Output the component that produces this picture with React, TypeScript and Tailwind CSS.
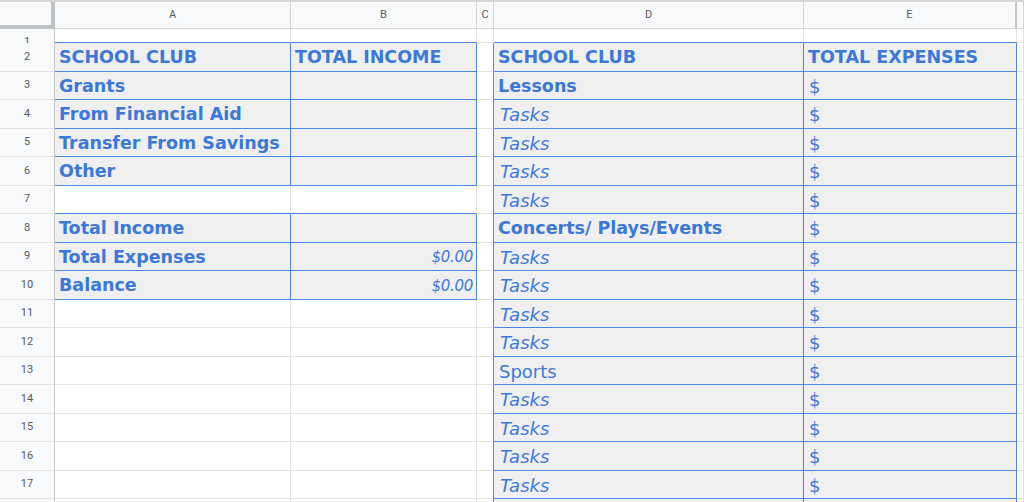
import React from "react";

// ── Sheet data ────────────────────────────────────────────────────────────────

type Cell = { text?: string; kind?: "bold" | "italic" | "plain" | "money" };

const COLS = ["A", "B", "C", "D", "E", ""];
const COL_W = ["w-[236px]", "w-[186px]", "w-[17px]", "w-[310px]", "w-[213px]", "flex-1"];

const ROW_H: Record<number, string> = {};
for (let r = 2; r <= 18; r++) ROW_H[r] = r % 2 === 0 ? "h-[29px]" : "h-[28px]";

const A: Record<number, Cell> = {
  2: { text: "SCHOOL CLUB", kind: "bold" },
  3: { text: "Grants", kind: "bold" },
  4: { text: "From Financial Aid", kind: "bold" },
  5: { text: "Transfer From Savings", kind: "bold" },
  6: { text: "Other", kind: "bold" },
  8: { text: "Total Income", kind: "bold" },
  9: { text: "Total Expenses", kind: "bold" },
  10: { text: "Balance", kind: "bold" },
};

const B: Record<number, Cell> = {
  2: { text: "TOTAL INCOME", kind: "bold" },
  9: { text: "$0.00", kind: "money" },
  10: { text: "$0.00", kind: "money" },
};

const D: Record<number, Cell> = {
  2: { text: "SCHOOL CLUB", kind: "bold" },
  3: { text: "Lessons", kind: "bold" },
  8: { text: "Concerts/ Plays/Events", kind: "bold" },
  13: { text: "Sports", kind: "plain" },
};
for (const r of [4, 5, 6, 7, 9, 10, 11, 12, 14, 15, 16, 17, 18]) D[r] = { text: "Tasks", kind: "italic" };

const E: Record<number, Cell> = { 2: { text: "TOTAL EXPENSES", kind: "bold" } };
for (let r = 3; r <= 18; r++) E[r] = { text: "$", kind: "plain" };

const DATA = [A, B, {}, D, E, {}] as Record<number, Cell>[];

function isBlue(r: number, c: number): boolean {
  if (c === 0 || c === 1) return (r >= 2 && r <= 6) || (r >= 8 && r <= 10);
  if (c === 3 || c === 4) return r >= 2 && r <= 18;
  return false;
}

// ── Cells ─────────────────────────────────────────────────────────────────────

function textClass(kind?: Cell["kind"]): string {
  switch (kind) {
    case "bold":
      return "font-bold text-[17.5px] pl-[4px]";
    case "italic":
      return "italic text-[18px] pl-[6px]";
    case "money":
      return "italic text-[15px] ml-auto pr-[3px] tracking-[-0.3px]";
    default:
      return "text-[18px] pl-[5px]";
  }
}

function SheetCell({ r, c }: { r: number; c: number }): React.ReactElement {
  const cell = DATA[c][r];
  const blue = isBlue(r, c);
  const rightBlue = blue || isBlue(r, c + 1);
  const bottomBlue = blue || isBlue(r + 1, c);
  return (
    <div
      className={`${COL_W[c]} shrink-0 h-full flex items-center pt-[2px] overflow-hidden whitespace-nowrap border-r border-b ${
        rightBlue ? "border-r-[#4a86e8]" : "border-r-[#e2e3e3]"
      } ${bottomBlue ? "border-b-[#4a86e8]" : "border-b-[#e2e3e3]"} ${
        blue ? "bg-[#efefef]" : "bg-white"
      }`}
    >
      {cell?.text && (
        <span className={`text-[#3c78d8] leading-none ${textClass(cell.kind)}`}>{cell.text}</span>
      )}
    </div>
  );
}

// ── Page ──────────────────────────────────────────────────────────────────────

export default function App(): React.ReactElement {
  const rows = Array.from({ length: 17 }, (_, i) => i + 2);

  return (
    <div className="w-[1024px] h-[502px] overflow-hidden bg-white font-['DejaVu_Sans',sans-serif]">
      {/* Column headers */}
      <div className="flex h-[29px] border-t-2 border-[#d6d6d6] bg-[#f8f9fa]">
        <div className="w-[55px] shrink-0 border-r-4 border-b-4 border-[#bfc2c4]" />
        {COLS.map((col, i) => (
          <div
            key={i}
            className={`${COL_W[i]} shrink-0 flex items-center justify-center border-r border-b border-[#d3d5d7] font-['Roboto',sans-serif] text-[11px] text-[#575a5e] ${
              i === 4 ? "border-r-2 border-r-[#c4c7c5]" : ""
            }`}
          >
            {col}
          </div>
        ))}
      </div>

      {/* Row 1 */}
      <div className="flex h-[14px]">
        <div className="w-[55px] shrink-0 border-r border-[#c4c7c5] bg-[#f8f9fa] overflow-hidden flex justify-center font-['Roboto',sans-serif] text-[11px] leading-none text-[#575a5e]">
          <span className="mt-[7px]">1</span>
        </div>
        {COLS.map((_, c) => (
          <div
            key={c}
            className={`${COL_W[c]} shrink-0 h-full border-r border-b border-r-[#e2e3e3] ${
              isBlue(2, c) ? "border-b-[#4a86e8]" : "border-b-[#e2e3e3]"
            }`}
          />
        ))}
      </div>

      {/* Body rows */}
      {rows.map((r) => (
        <div key={r} className={`flex ${ROW_H[r]}`}>
          <div className="w-[55px] shrink-0 flex items-center justify-center border-r border-b border-r-[#c4c7c5] border-b-[#e2e3e3] bg-[#f8f9fa] font-['Roboto',sans-serif] text-[11px] text-[#575a5e]">
            {r}
          </div>
          {COLS.map((_, c) => (
            <SheetCell key={c} r={r} c={c} />
          ))}
        </div>
      ))}
    </div>
  );
}
